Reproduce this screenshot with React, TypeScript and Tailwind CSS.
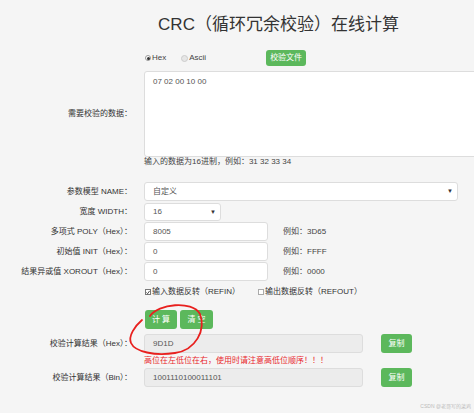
import React from "react";

const font = { fontFamily: '"Liberation Sans", "Noto Sans CJK SC", sans-serif' };

function Label({ children }: { children: React.ReactNode }) {
  return (
    <div className="w-[144px] shrink-0 pr-[12px] text-right text-[8px] text-[#333] whitespace-nowrap">
      {children}
    </div>
  );
}

function Input({ value, w, dis }: { value: string; w: string; dis?: boolean }) {
  return (
    <div
      className={`${w} h-[19px] flex items-center pl-[8px] text-[8px] text-[#555] rounded-[3px] border border-[#ddd] ${
        dis ? "bg-[#ececec]" : "bg-white"
      }`}
    >
      {value}
    </div>
  );
}

function GreenBtn({ children, w, h = "h-[19px]" }: { children: React.ReactNode; w: string; h?: string }) {
  return (
    <div className={`${w} ${h} flex items-center justify-center rounded-[3px] bg-[#5cb85c] text-white text-[8px]`}>
      {children}
    </div>
  );
}

export default function App() {
  return (
    <div className="relative w-[474px] h-[413px] overflow-hidden bg-[#f5f5f5]" style={font}>
      <div className="pl-[83px] pt-[12px] h-[47px] text-center text-[17px] leading-[26px] text-[#333] whitespace-nowrap">
        CRC（循环冗余校验）在线计算
      </div>

      {/* radio row */}
      <div className="flex items-center h-[22px]">
        <div className="w-[144px] shrink-0" />
        <div className="flex items-center text-[8px] text-[#444]">
          <span className="w-[6px] h-[6px] rounded-full border border-[#999] bg-white flex items-center justify-center ml-[1px]">
            <span className="w-[3px] h-[3px] rounded-full bg-[#333]" />
          </span>
          <span className="ml-[1px]">Hex</span>
          <span className="w-[7px] h-[7px] rounded-full border border-[#ccc] bg-[#e6e6e6] ml-[15px]" />
          <span className="ml-[1px]">Ascii</span>
          <div className="ml-[60px]">
            <GreenBtn w="w-[40px]" h="h-[16px]">校验文件</GreenBtn>
          </div>
        </div>
      </div>

      {/* textarea */}
      <div className="flex items-center mt-[2px]">
        <Label>需要校验的数据：</Label>
        <div className="w-[340px] h-[86px] bg-white border border-[#ddd] rounded-[3px] pl-[8px] pt-[4px] text-[8px] text-[#555] shrink-0">
          07 02 00 10 00
        </div>
      </div>

      <div className="flex h-[12px] items-center mt-[-1px]">
        <div className="w-[144px] shrink-0" />
        <div className="text-[8px] text-[#444]">输入的数据为16进制，例如：31 32 33 34</div>
      </div>

      {/* NAME */}
      <div className="flex items-center mt-[14px]">
        <Label>参数模型 NAME：</Label>
        <div className="w-[314px] h-[19px] bg-white border border-[#ddd] rounded-[3px] flex items-center justify-between pl-[8px] pr-[4px] text-[8px] text-[#555]">
          <span>自定义</span>
          <span className="text-[6px] text-[#333]">▼</span>
        </div>
      </div>

      <div className="flex items-center mt-[2px]">
        <Label>宽度 WIDTH：</Label>
        <div className="w-[77px] h-[18px] bg-white border border-[#ddd] rounded-[3px] flex items-center justify-between pl-[8px] pr-[4px] text-[8px] text-[#555]">
          <span>16</span>
          <span className="text-[6px] text-[#333]">▼</span>
        </div>
      </div>

      <div className="flex items-center mt-[1px]">
        <Label>多项式 POLY（Hex）：</Label>
        <Input value="8005" w="w-[124px]" />
        <div className="ml-[15px] text-[8px] text-[#444]">例如：3D65</div>
      </div>
      <div className="flex items-center mt-[1px]">
        <Label>初始值 INIT（Hex）：</Label>
        <Input value="0" w="w-[124px]" />
        <div className="ml-[15px] text-[8px] text-[#444]">例如：FFFF</div>
      </div>
      <div className="flex items-center mt-[1px]">
        <Label>结果异或值 XOROUT（Hex）：</Label>
        <Input value="0" w="w-[124px]" />
        <div className="ml-[15px] text-[8px] text-[#444]">例如：0000</div>
      </div>

      {/* checkboxes */}
      <div className="flex items-center h-[20px] mt-[1px]">
        <div className="w-[144px] shrink-0" />
        <div className="flex items-center text-[8px] text-[#333]">
          <span className="w-[6px] h-[6px] border border-[#777] bg-white flex items-center justify-center ml-[1px]">
            <svg width="5" height="5" viewBox="0 0 10 10">
              <path d="M1 5 L4 8 L9 1" fill="none" stroke="#222" strokeWidth="2" />
            </svg>
          </span>
          <span className="ml-[1px]">输入数据反转（REFIN）</span>
          <span className="w-[6px] h-[6px] border border-[#aaa] bg-white ml-[18px]" />
          <span className="ml-[1px]">输出数据反转（REFOUT）</span>
        </div>
      </div>

      {/* buttons */}
      <div className="flex items-center mt-[8px]">
        <div className="w-[145px] shrink-0" />
        <GreenBtn w="w-[32px]">计 算</GreenBtn>
        <div className="ml-[3px]">
          <GreenBtn w="w-[33px]">清 空</GreenBtn>
        </div>
      </div>

      <div className="flex items-center mt-[5px]">
        <Label>校验计算结果（Hex）：</Label>
        <Input value="9D1D" w="w-[219px]" dis />
        <div className="ml-[18px]">
          <GreenBtn w="w-[31px]">复制</GreenBtn>
        </div>
      </div>
      <div className="flex h-[15px] items-center">
        <div className="w-[144px] shrink-0" />
        <div className="text-[8px] text-[#e8262b] whitespace-nowrap">高位在左低位在右，使用时请注意高低位顺序！！！</div>
      </div>
      <div className="flex items-center">
        <Label>校验计算结果（Bin）：</Label>
        <Input value="1001110100011101" w="w-[219px]" dis />
        <div className="ml-[18px]">
          <GreenBtn w="w-[31px]">复制</GreenBtn>
        </div>
      </div>

      <div className="absolute right-[3px] bottom-[3px] text-[5px] text-[#bbb] whitespace-nowrap">CSDN @老哥写的菜鸡</div>

      <svg className="absolute left-0 top-0 pointer-events-none" width="474" height="413">
        <path
          d="M150 316 C158 304, 192 300, 200 314 C206 330, 196 350, 175 353 C155 356, 135 352, 131 343 C128 336, 135 326, 142 320"
          fill="none"
          stroke="#e8201e"
          strokeWidth="1.8"
          strokeLinecap="round"
        />
      </svg>
    </div>
  );
}
